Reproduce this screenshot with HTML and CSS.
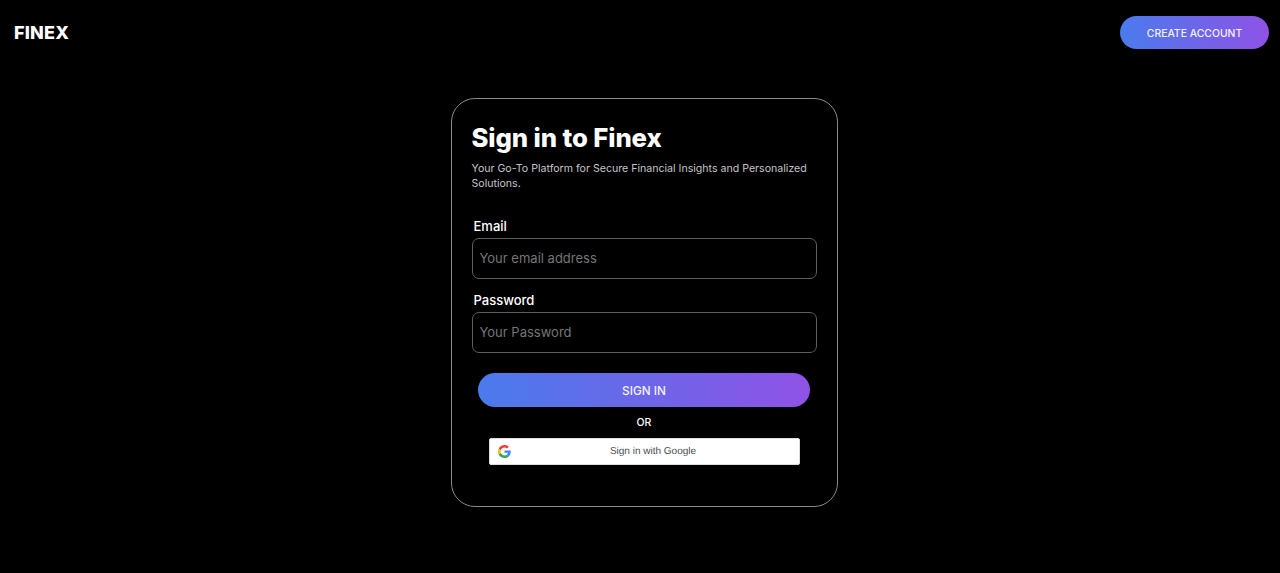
FILE: index.html
```html
<!DOCTYPE html>
<html lang="en">
<head>
<meta charset="utf-8">
<title>Finex - Sign in</title>
<link rel="stylesheet" href="styles.css">
</head>
<body>
<header class="nav">
  <a class="logo">FINEX</a>
  <button class="btn-create" type="button">CREATE ACCOUNT</button>
</header>
<main class="main">
  <form class="card">
    <h1 class="title">Sign in to Finex</h1>
    <p class="subtitle">Your Go-To Platform for Secure Financial Insights and Personalized Solutions.</p>
    <div class="fields">
      <label class="label" for="email">Email</label>
      <input class="input" id="email" type="email" placeholder="Your email address">
      <label class="label label-second" for="password">Password</label>
      <input class="input" id="password" type="password" placeholder="Your Password">
    </div>
    <button class="btn-signin" type="button">SIGN IN</button>
    <div class="or">OR</div>
    <button class="btn-google" type="button">
      <svg class="g-icon" viewBox="0 0 48 48" width="13" height="13" aria-hidden="true">
        <path fill="#EA4335" d="M24 9.5c3.54 0 6.71 1.22 9.21 3.6l6.85-6.85C35.9 2.38 30.47 0 24 0 14.62 0 6.51 5.38 2.56 13.22l7.98 6.19C12.43 13.72 17.74 9.5 24 9.5z"/>
        <path fill="#4285F4" d="M46.98 24.55c0-1.57-.15-3.09-.38-4.55H24v9.02h12.94c-.58 2.96-2.26 5.48-4.78 7.18l7.73 6c4.51-4.18 7.09-10.36 7.09-17.65z"/>
        <path fill="#FBBC05" d="M10.53 28.59c-.48-1.45-.76-2.99-.76-4.59s.27-3.14.76-4.59l-7.98-6.19C.92 16.46 0 20.12 0 24c0 3.88.92 7.54 2.56 10.78l7.97-6.19z"/>
        <path fill="#34A853" d="M24 48c6.48 0 11.93-2.13 15.89-5.81l-7.73-6c-2.15 1.45-4.92 2.3-8.16 2.3-6.26 0-11.57-4.22-13.47-9.91l-7.98 6.19C6.51 42.62 14.62 48 24 48z"/>
      </svg>
      <span class="g-text">Sign in with Google</span>
    </button>
  </form>
</main>
</body>
</html>
```
FILE: styles.css
```css
* { box-sizing: border-box; }
html, body { margin: 0; height: 100%; }
body {
  background: #000;
  color: #fff;
  font-family: Inter, "Open Sans", sans-serif;
  overflow: hidden;
}
.nav {
  display: flex;
  align-items: center;
  justify-content: space-between;
  height: 65px;
  padding: 0 11px 0 14px;
}
.logo {
  font-size: 18px;
  font-weight: 800;
  letter-spacing: 0.2px;
}
.btn-create {
  width: 149px;
  height: 33px;
  padding: 1px 0 0;
  border: 0;
  border-radius: 17px;
  background: linear-gradient(90deg, #4a7bec, #8f52e6);
  color: #f1f1ff;
  font: 500 10.4px Inter, sans-serif;
}
.main {
  display: flex;
  justify-content: center;
  padding: 33px 0 0 8px;
}
.card {
  display: flex;
  flex-direction: column;
  width: 387px;
  height: 409px;
  padding: 22px 20px 0;
  border: 1px solid #8a8a8a;
  border-radius: 24px;
}
.title {
  margin: 0;
  height: 34px;
  font-size: 25.7px;
  line-height: 34px;
  font-weight: 800;
  letter-spacing: -0.1px;
}
.subtitle {
  margin: 6px 0 0;
  font-size: 10.6px;
  line-height: 15px;
  color: #c4c4c4;
}
.fields {
  display: flex;
  flex-direction: column;
  margin-top: 25px;
}
.label {
  height: 22px;
  padding-left: 2px;
  font-size: 13px;
  line-height: 20px;
  font-weight: 500;
}
.label-second { margin-top: 11px; }
.input {
  width: 345px;
  height: 41px;
  padding: 0 6px 2px 7px;
  border: 1px solid #5e5e5e;
  border-radius: 7px;
  background: #000;
  color: #fff;
  font: 400 13px Inter, sans-serif;
}
.input::placeholder { color: #757575; opacity: 1; }
.btn-signin {
  align-self: center;
  width: 332px;
  height: 34px;
  margin-top: 20px;
  padding: 1px 0 0;
  border: 0;
  border-radius: 17px;
  background: linear-gradient(90deg, #4a7bec, #8f52e6);
  color: #f1f1ff;
  font: 500 11.8px Inter, sans-serif;
}
.or {
  margin-top: 8px;
  height: 15px;
  text-align: center;
  font-size: 10.5px;
  line-height: 15px;
  font-weight: 500;
}
.btn-google {
  position: relative;
  align-self: center;
  display: flex;
  align-items: center;
  justify-content: center;
  width: 311px;
  height: 27px;
  margin-top: 8px;
  padding: 0 0 0 18px;
  border: 1px solid #dadce0;
  border-radius: 2px;
  background: #fff;
  color: #4a4d50;
  font: 400 10px "Liberation Sans", Arial, sans-serif;
  text-rendering: geometricPrecision;
}
.g-icon {
  position: absolute;
  left: 8px;
  top: 6px;
}
```
